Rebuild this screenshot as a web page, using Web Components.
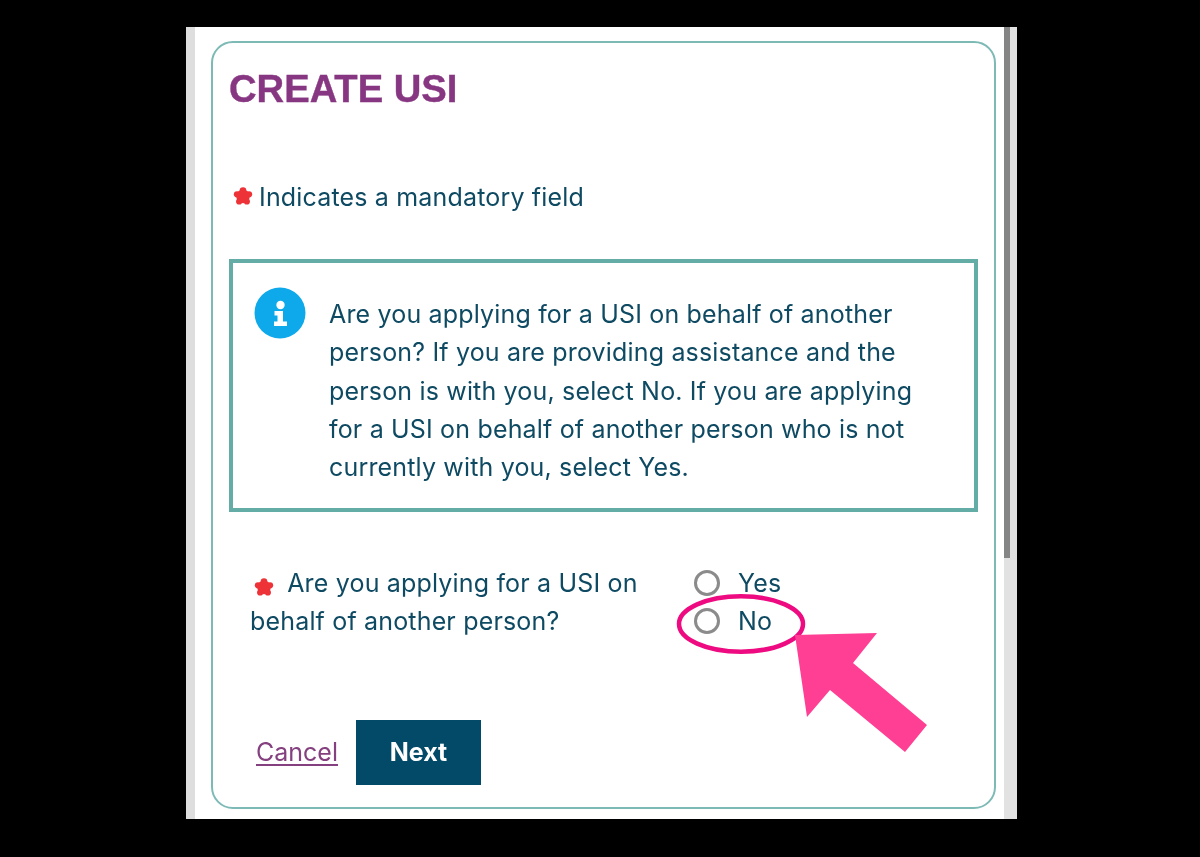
<!DOCTYPE html>
<html lang="en">
<head>
<meta charset="utf-8">
<title>Create USI</title>
<style>
  html, body { margin: 0; height: 100%; background: #000; overflow: hidden; }
</style>
</head>
<body>
<usi-frame>
  <usi-card heading="CREATE USI">
    <usi-mandatory-note>Indicates a mandatory field</usi-mandatory-note>
    <usi-info-box>Are you applying for a USI on behalf of another person? If you are providing assistance and the person is with you, select No. If you are applying for a USI on behalf of another person who is not currently with you, select Yes.</usi-info-box>
    <usi-question>
      Are you applying for a USI on behalf of another person?
      <usi-radio slot="options">Yes</usi-radio>
      <usi-radio slot="options" highlighted>No</usi-radio>
    </usi-question>
    <usi-actions></usi-actions>
  </usi-card>
</usi-frame>

<script>
const STAR = `
  <svg class="star" viewBox="0 0 24 24" width="22" height="22" aria-hidden="true">
    <g fill="#ee3338">
      <circle cx="12" cy="12.4" r="7.4"/>
      <circle cx="12" cy="6" r="3.6"/>
      <circle cx="5.4" cy="10.2" r="3.4"/>
      <circle cx="18.6" cy="10.2" r="3.4"/>
      <circle cx="7.8" cy="18" r="3.4"/>
      <circle cx="16.2" cy="18" r="3.4"/>
    </g>
  </svg>`;

const BODY_FONT = `Inter, "Noto Sans", sans-serif`;

class UsiFrame extends HTMLElement {
  constructor() {
    super();
    this.attachShadow({ mode: "open" }).innerHTML = `
      <style>
        :host {
          display: flex;
          box-sizing: border-box;
          width: 831px;
          height: 792px;
          margin: 27px 0 0 186px;
          background: #fff;
          overflow: hidden;
          filter: blur(.3px);
        }
        .edge { width: 9px; background: #dedede; flex: none; }
        main { flex: 1; min-width: 0; padding: 14px 8px 0 16px; }
        .track { width: 13px; flex: none; display: flex; background: #e2e2e2; }
        .thumb { width: 6px; height: 531px; background: #858585; }
      </style>
      <div class="edge"></div>
      <main><slot></slot></main>
      <div class="track"><div class="thumb"></div></div>
    `;
  }
}

class UsiCard extends HTMLElement {
  constructor() {
    super();
    this.attachShadow({ mode: "open" }).innerHTML = `
      <style>
        :host {
          display: block;
          box-sizing: border-box;
          height: 768px;
          padding: 23px 16px 0;
          border: 2px solid #7dbab6;
          border-radius: 22px;
          font-family: ${BODY_FONT};
          letter-spacing: .17px;
          color: #0f4a63;
        }
        h1 {
          margin: 0;
          font: bold 38.2px/46px "Liberation Sans", Arial, sans-serif;
          letter-spacing: 0;
          -webkit-text-stroke: .4px #873782;
          color: #873782;
        }
      </style>
      <h1></h1>
      <slot></slot>
    `;
    this.shadowRoot.querySelector("h1").textContent = this.getAttribute("heading");
  }
}

class UsiMandatoryNote extends HTMLElement {
  constructor() {
    super();
    this.attachShadow({ mode: "open" }).innerHTML = `
      <style>
        :host {
          display: flex;
          align-items: center;
          margin: 66px 0 0 3px;
          font-size: 25px;
          line-height: 38px;
        }
        .star { flex: none; margin: -2px 5px 0 0; filter: blur(.5px); }
      </style>
      ${STAR}<span><slot></slot></span>
    `;
  }
}

class UsiInfoBox extends HTMLElement {
  constructor() {
    super();
    this.attachShadow({ mode: "open" }).innerHTML = `
      <style>
        :host {
          display: flex;
          box-sizing: border-box;
          width: 749px;
          height: 253px;
          margin-top: 43px;
          padding: 32px 60px 0 21px;
          border: 4px solid #64aca6;
          font-size: 25px;
          line-height: 38.3px;
        }
        svg { flex: none; margin: -8px 23px 0 0; }
      </style>
      <svg width="52" height="52" viewBox="0 0 52 52" aria-hidden="true">
        <circle cx="26" cy="26" r="25.5" fill="#0ea9ea"/>
        <circle cx="26.5" cy="18" r="4.2" fill="#fff"/>
        <path fill="#fff" d="M20.5 24h8.5v10.5h4V39H20v-4.5h3.5v-6h-3z"/>
      </svg>
      <div><slot></slot></div>
    `;
  }
}

class UsiQuestion extends HTMLElement {
  constructor() {
    super();
    this.attachShadow({ mode: "open" }).innerHTML = `
      <style>
        :host {
          display: grid;
          grid-template-columns: 427px 1fr;
          margin: 52px 0 0 21px;
          font-size: 25px;
          line-height: 38px;
        }
        .star { vertical-align: -6px; margin: 0 5px 0 3px; filter: blur(.5px); }
        .text { width: 400px; }
      </style>
      <div class="text">${STAR}<slot></slot></div>
      <div><slot name="options"></slot></div>
    `;
  }
}

class UsiRadio extends HTMLElement {
  constructor() {
    super();
    this.attachShadow({ mode: "open" }).innerHTML = `
      <style>
        :host { display: flex; align-items: center; position: relative; gap: 18px; padding-left: 17px; height: 38px; }
        .dot { flex: none; box-sizing: border-box; width: 26px; height: 26px; border: 3px solid #8b8b8b; border-radius: 50%; }
        .ring, .arrow { position: absolute; display: none; }
        :host([highlighted]) .ring, :host([highlighted]) .arrow { display: block; }
        .ring { left: -1px; top: -9px; }
        .arrow { left: 118px; top: 31px; }
      </style>
      <span class="dot"></span>
      <span><slot></slot></span>
      <svg class="ring" width="130" height="62" viewBox="0 0 130 62" aria-hidden="true">
        <ellipse cx="65" cy="31" rx="62" ry="27.7" fill="none" stroke="#ee0a80" stroke-width="4.5"/>
      </svg>
      <svg class="arrow" width="134" height="120" viewBox="795 633 134 120" aria-hidden="true">
        <polygon fill="#ff3f94" points="795,635 877,633 853,663 927,725 905,752 830,690 807,717"/>
      </svg>
    `;
  }
}

class UsiActions extends HTMLElement {
  constructor() {
    super();
    this.attachShadow({ mode: "open" }).innerHTML = `
      <style>
        :host {
          display: flex;
          align-items: center;
          gap: 18px;
          margin: 80px 0 0 27px;
          font-size: 25px;
          letter-spacing: 0;
        }
        a {
          margin-bottom: 2px;
          color: #84407f;
          text-decoration: underline;
          text-underline-offset: 2.5px;
          text-decoration-thickness: 2px;
        }
        button {
          width: 125px;
          height: 65px;
          padding: 0 0 2px;
          border: 0;
          background: #024a68;
          color: #fff;
          font: bold 25px ${BODY_FONT};
        }
      </style>
      <a href="#">Cancel</a>
      <button type="button">Next</button>
    `;
  }
}

customElements.define("usi-frame", UsiFrame);
customElements.define("usi-card", UsiCard);
customElements.define("usi-mandatory-note", UsiMandatoryNote);
customElements.define("usi-info-box", UsiInfoBox);
customElements.define("usi-question", UsiQuestion);
customElements.define("usi-radio", UsiRadio);
customElements.define("usi-actions", UsiActions);
</script>
</body>
</html>
